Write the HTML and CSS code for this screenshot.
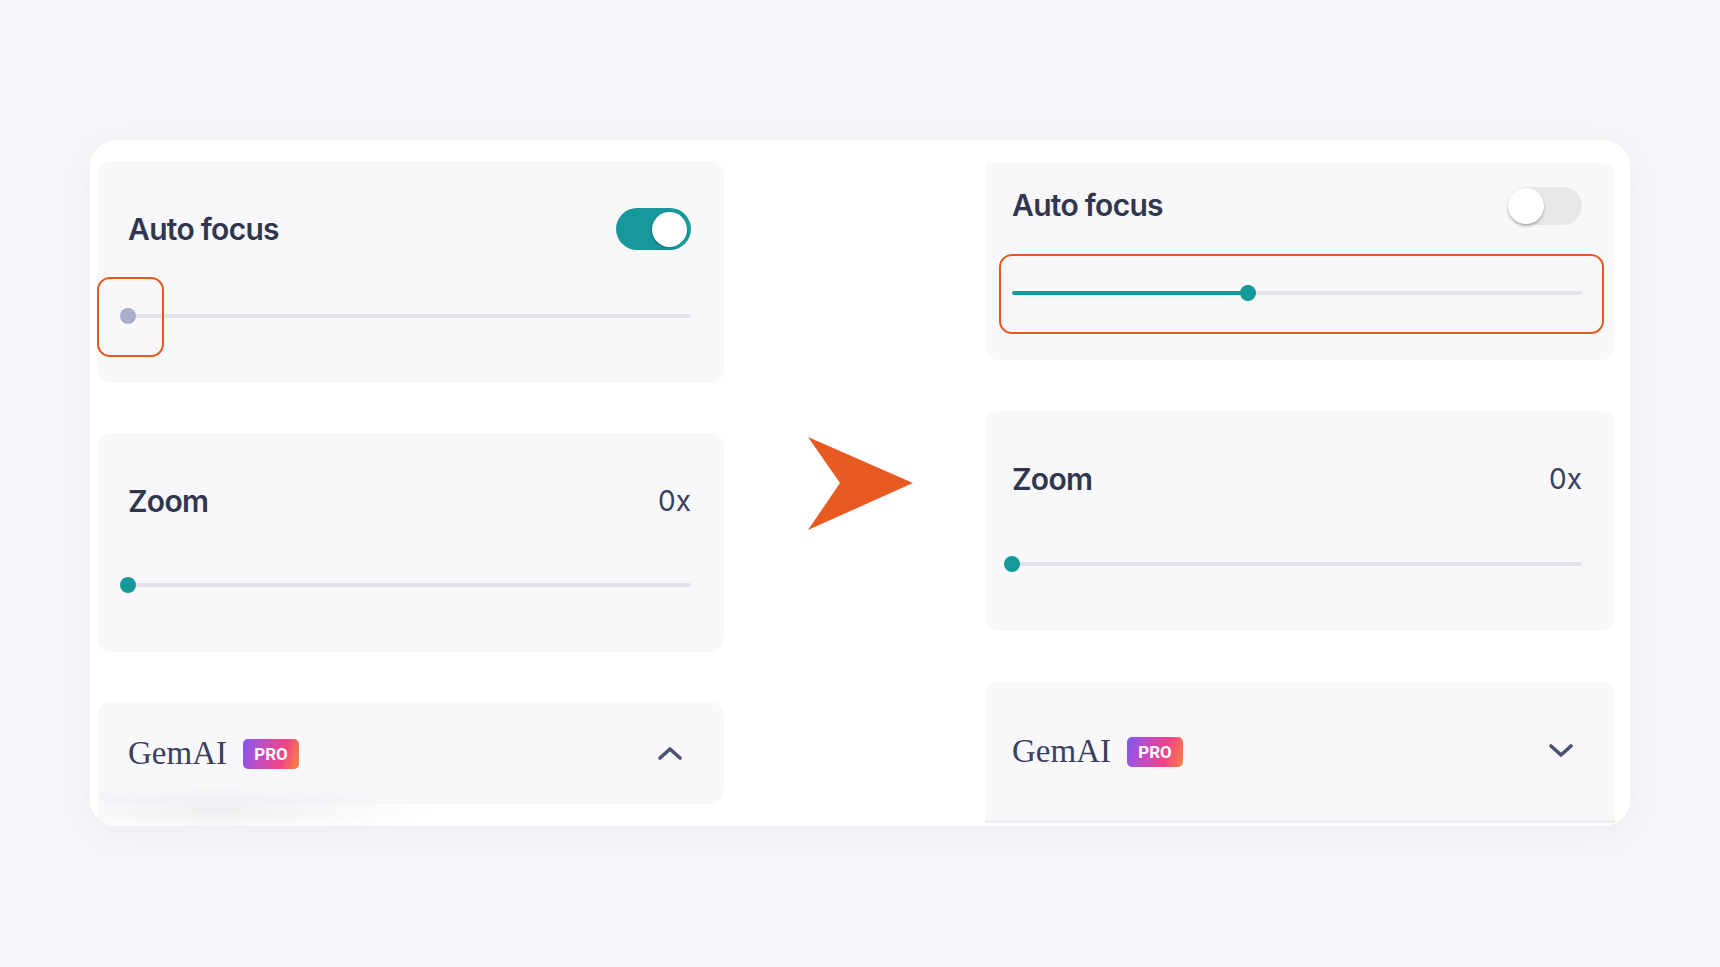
FILE: index.html
```html
<!DOCTYPE html>
<html lang="en">
<head>
<meta charset="utf-8">
<title>Auto focus settings</title>
<link rel="stylesheet" href="styles.css">
</head>
<body>
<div class="card">
  <div class="col col-left">
    <section class="panel lp1">
      <div class="row">
        <span class="label">Auto focus</span>
        <span class="toggle on"><span class="knob"></span></span>
      </div>
      <div class="slider lp1-slider">
        <div class="track"></div>
        <div class="thumb gray" style="left:0%"></div>
      </div>
      <div class="highlight hl-left"></div>
    </section>
    <section class="panel lp2">
      <div class="row">
        <span class="label">Zoom</span>
        <span class="value">0x</span>
      </div>
      <div class="slider lp2-slider">
        <div class="track"></div>
        <div class="thumb" style="left:0%"></div>
      </div>
    </section>
    <section class="panel lp3">
      <div class="row">
        <span class="gem"><span class="gem-name">GemAI</span><span class="pro">PRO</span></span>
        <svg class="chev" width="26" height="16" viewBox="0 0 26 16"><path d="M3 13 L13 4 L23 13" fill="none" stroke="#4b5170" stroke-width="3.6" stroke-linecap="round" stroke-linejoin="round"/></svg>
      </div>
      <div class="smear"></div>
    </section>
  </div>

  <div class="arrow-col">
    <svg class="arrow" width="108" height="96" viewBox="0 0 108 96"><polygon points="1,0 106,46 1,93 33,46" fill="#e75a22"/></svg>
  </div>

  <div class="col col-right">
    <section class="panel rp1">
      <div class="row">
        <span class="label">Auto focus</span>
        <span class="toggle off"><span class="knob"></span></span>
      </div>
      <div class="slider rp1-slider">
        <div class="track"></div>
        <div class="fill" style="width:41.4%"></div>
        <div class="thumb" style="left:41.4%"></div>
      </div>
      <div class="highlight hl-right"></div>
    </section>
    <section class="panel rp2">
      <div class="row">
        <span class="label">Zoom</span>
        <span class="value">0x</span>
      </div>
      <div class="slider rp2-slider">
        <div class="track"></div>
        <div class="thumb" style="left:0%"></div>
      </div>
    </section>
    <section class="panel rp3">
      <div class="row">
        <span class="gem"><span class="gem-name">GemAI</span><span class="pro">PRO</span></span>
        <svg class="chev" width="26" height="16" viewBox="0 0 26 16"><path d="M3 3 L13 12 L23 3" fill="none" stroke="#4b5170" stroke-width="3.6" stroke-linecap="round" stroke-linejoin="round"/></svg>
      </div>
    </section>
  </div>
</div>
</body>
</html>
```

FILE: styles.css
```css
* { box-sizing: border-box; }
html, body { margin: 0; padding: 0; }
body {
  width: 1720px;
  height: 967px;
  background: #f6f6fa;
  padding: 140px 90px 0 90px;
  font-family: Inter, "Noto Sans", sans-serif;
  color: #2f344f;
  overflow: hidden;
}
.card {
  width: 1540px;
  height: 686px;
  background: #ffffff;
  border-radius: 26px;
  display: flex;
  overflow: hidden;
  box-shadow: 0 8px 30px rgba(40, 40, 80, 0.05);
}
.col { display: flex; flex-direction: column; }
.col-left { width: 634px; padding: 21px 0 0 7px; gap: 50px; }
.col-right { width: 645px; padding: 23px 15px 0 0; gap: 51px; }
.arrow-col {
  flex: 1;
  display: flex;
  align-items: center;
  justify-content: center;
  padding: 4px 0 0 12px;
}
.panel {
  position: relative;
  background: #f8f8fb;
  border-radius: 14px;
  flex: none;
}
.col-left .panel { padding: 0 33px 0 31px; }
.col-right .panel { padding: 0 33px 0 27px; }
.row {
  display: flex;
  align-items: center;
  justify-content: space-between;
  height: 42px;
}
.label {
  font-size: 30px;
  font-weight: 600;
  letter-spacing: -0.7px;
  color: #31364f;
}
.value {
  font-size: 28px;
  font-weight: 400;
  color: #3a3f5b;
}
.lp1 { height: 222px; padding-top: 47px !important; }
.lp2 { height: 219px; padding-top: 47px !important; }
.lp3 { height: 102px; padding-top: 30px !important; }
.rp1 { height: 197px; padding-top: 21px !important; }
.rp2 { height: 220px; padding-top: 47px !important; }
.rp3 { height: 141px; padding-top: 48px !important; border-bottom: 3px solid #ececf1; border-radius: 14px 14px 0 0; }
.rp1 { border-radius: 4px 14px 14px 14px; }

.slider { position: relative; height: 20px; }
.lp1-slider { margin-top: 56px; }
.lp2-slider { margin-top: 53px; }
.rp1-slider { margin-top: 57px; }
.rp2-slider { margin-top: 54px; }
.track {
  position: absolute;
  left: 0; right: 0; top: 8px;
  height: 4px;
  border-radius: 2px;
  background: #e1e4ec;
}
.fill {
  position: absolute;
  left: 0; top: 8px;
  height: 4px;
  border-radius: 2px;
  background: #16999a;
}
.thumb {
  position: absolute;
  top: 2px;
  width: 16px; height: 16px;
  margin-left: -8px;
  border-radius: 50%;
  background: #16999a;
}
.thumb.gray { background: #a9aec8; }

.toggle {
  position: relative;
  width: 75px; height: 42px;
  border-radius: 21px;
  display: block;
}
.toggle .knob {
  position: absolute;
  top: 4px;
  width: 35px; height: 35px;
  border-radius: 50%;
  background: #fff;
}
.toggle.on { background: #17989a; }
.toggle.on .knob { right: 4px; box-shadow: -1px 1px 2px rgba(0,0,0,0.25); }
.toggle.off { background: #e7e7ea; height: 38px; margin-top: 2px; width: 74px; }
.toggle.off .knob { left: 0; top: 1px; width: 36px; height: 36px; box-shadow: 0 2px 3px rgba(0,0,0,0.28); }

.highlight {
  position: absolute;
  border: 2px solid #e4581d;
  border-radius: 13px;
  pointer-events: none;
}
.hl-left { left: 0; top: 116px; width: 67px; height: 80px; }
.hl-right { left: 14px; top: 91px; width: 605px; height: 80px; }

.gem { display: flex; align-items: center; gap: 16px; }
.gem-name {
  font-family: "Liberation Serif", "Times New Roman", serif;
  font-size: 33px;
  color: #3a3f5e;
}
.pro {
  display: inline-flex;
  align-items: center;
  justify-content: center;
  width: 56px; height: 30px;
  border-radius: 5px;
  background: linear-gradient(105deg, #7d58f6 0%, #c44cc0 35%, #ef4683 70%, #ff8540 100%);
  color: #fff;
  font-family: Roboto, Inter, sans-serif;
  font-weight: 700;
  font-size: 17px;
  letter-spacing: 0;
  margin-top: 2px;
}
.chev { display: block; margin-right: 8px; }
.smear {
  position: absolute;
  left: 0; bottom: -30px;
  width: 340px; height: 44px;
  background: radial-gradient(ellipse at 35% 45%, rgba(228,228,234,0.6), rgba(240,240,245,0) 70%);
  pointer-events: none;
}
```
